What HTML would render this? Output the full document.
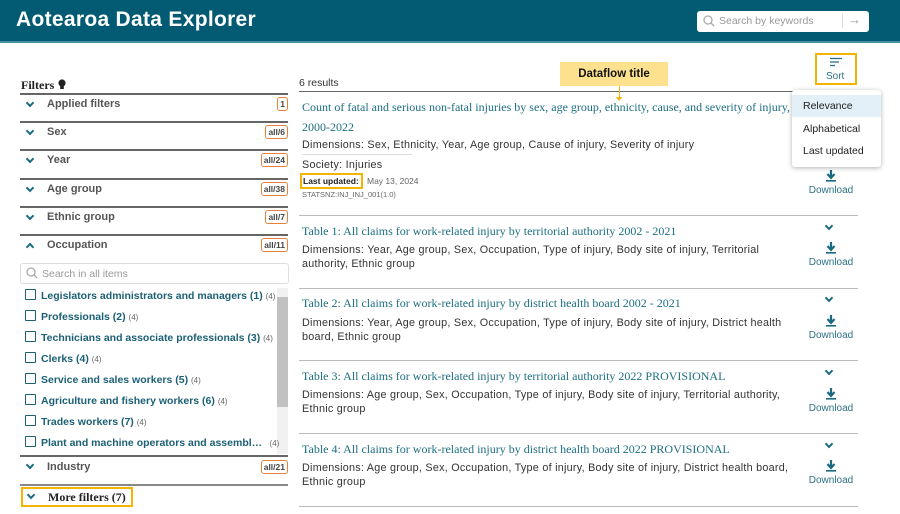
<!DOCTYPE html>
<html><head><style>
*{box-sizing:border-box;margin:0;padding:0}
body{width:900px;height:514px;overflow:hidden;background:#fff;font-family:"Liberation Sans",sans-serif;position:relative}
.abs{position:absolute}
.hdr{left:0;top:0;width:900px;height:43px;background:#035a73;border-bottom:2px solid #4a8ea0}
.sep{position:absolute;height:1px;background:#777}
.chev{position:absolute;width:6px;height:6px;border-right:2px solid #1a6a82;border-bottom:2px solid #1a6a82;transform:rotate(45deg)}
.flab{position:absolute;left:47px;font-size:11px;font-weight:bold;color:#555}
.badge{position:absolute;right:612px;border:1.5px solid #e8803a;border-radius:3px;font-size:8.5px;font-weight:bold;color:#444;padding:1px 2px;line-height:10px}
.item{position:absolute;left:25px;font-size:10.5px;color:#1b6075;font-weight:bold;white-space:nowrap}
.item:before{content:"";display:inline-block;width:9px;height:9px;border:1.5px solid #1b6075;border-radius:1px;margin-right:5px;vertical-align:-1px}
.item small{font-size:8px;color:#666;font-weight:normal}
.title{position:absolute;left:302px;font-family:"Liberation Serif",serif;font-size:12px;color:#1d6e82}
.dim{position:absolute;left:302px;width:490px;font-size:10.8px;letter-spacing:0.25px;color:#333;line-height:14px}
.dl{position:absolute;left:806px;width:50px;text-align:center;font-size:10px;color:#2a7186}
.dl svg{display:block;margin:0 auto 3px}
.rsep{position:absolute;left:299px;width:559px;height:1px;background:#bbb}
</style></head><body>
<div class="abs hdr"></div>
<div class="abs" style="left:16px;top:8px;font-size:21px;color:#fff;font-weight:bold;letter-spacing:0.3px">Aotearoa Data Explorer</div>
<div class="abs" style="left:697px;top:11px;width:172px;height:21px;background:#fff;border-radius:3px"></div>
<svg class="abs" style="left:703px;top:15px" width="12" height="12"><circle cx="5" cy="5" r="4" fill="none" stroke="#aaa" stroke-width="1.3"/><line x1="8" y1="8" x2="11" y2="11" stroke="#aaa" stroke-width="1.3"/></svg>
<div class="abs" style="left:719px;top:15px;font-size:10.5px;color:#999">Search by keywords</div>
<div class="abs" style="left:842px;top:14px;width:1px;height:14px;background:#ddd"></div>
<div class="abs" style="left:848px;top:12px;font-size:13px;color:#999">→</div>

<div class="abs" style="left:21px;top:78px;font-family:'Liberation Serif',serif;font-weight:bold;font-size:12px;color:#222">Filters</div>
<svg class="abs" style="left:58px;top:79px" width="8" height="11"><circle cx="4" cy="4" r="3.6" fill="#222"/><rect x="2.2" y="7" width="3.6" height="3" fill="#222"/></svg>
<div class="sep" style="left:20px;width:268px;top:93px;height:2px;background:#666"></div>
<div class="chev" style="left:27px;top:100px"></div><div class="flab" style="top:98px">Applied filters</div><div class="badge" style="top:97px">1</div>
<div class="sep" style="left:20px;width:268px;top:121px;height:2px;background:#666"></div>
<div class="chev" style="left:27px;top:128px"></div><div class="flab" style="top:126px">Sex</div><div class="badge" style="top:125px">all/6</div>
<div class="sep" style="left:20px;width:268px;top:149px;height:2px;background:#666"></div>
<div class="chev" style="left:27px;top:156px"></div><div class="flab" style="top:154px">Year</div><div class="badge" style="top:153px">all/24</div>
<div class="sep" style="left:20px;width:268px;top:178px;height:2px;background:#666"></div>
<div class="chev" style="left:27px;top:185px"></div><div class="flab" style="top:183px">Age group</div><div class="badge" style="top:182px">all/38</div>
<div class="sep" style="left:20px;width:268px;top:206px;height:2px;background:#666"></div>
<div class="chev" style="left:27px;top:213px"></div><div class="flab" style="top:211px">Ethnic group</div><div class="badge" style="top:210px">all/7</div>
<div class="sep" style="left:20px;width:268px;top:234px;height:2px;background:#666"></div>
<div class="chev" style="left:27px;top:244px;transform:rotate(225deg)"></div><div class="flab" style="top:239px">Occupation</div><div class="badge" style="top:238px">all/11</div>
<div class="abs" style="left:20px;top:263px;width:269px;height:21px;border:1px solid #ddd;border-radius:3px"></div>
<svg class="abs" style="left:26px;top:267px" width="12" height="12"><circle cx="5" cy="5" r="4" fill="none" stroke="#aaa" stroke-width="1.3"/><line x1="8" y1="8" x2="11" y2="11" stroke="#aaa" stroke-width="1.3"/></svg>
<div class="abs" style="left:42px;top:268px;font-size:10.5px;color:#999">Search in all items</div>
<div class="abs" style="left:277px;top:288px;width:11px;height:166px;background:#f1f1f1"></div>
<div class="abs" style="left:277px;top:297px;width:11px;height:110px;background:#c1c1c1"></div>
<div class="item" style="top:289px">Legislators administrators and managers (1) <small>(4)</small></div>
<div class="item" style="top:310px">Professionals (2) <small>(4)</small></div>
<div class="item" style="top:331px">Technicians and associate professionals (3) <small>(4)</small></div>
<div class="item" style="top:352px">Clerks (4) <small>(4)</small></div>
<div class="item" style="top:373px">Service and sales workers (5) <small>(4)</small></div>
<div class="item" style="top:394px">Agriculture and fishery workers (6) <small>(4)</small></div>
<div class="item" style="top:415px">Trades workers (7) <small>(4)</small></div>
<div class="item" style="top:436px">Plant and machine operators and assembl… <small>&nbsp;&nbsp;(4)</small></div>
<div class="sep" style="left:20px;width:268px;top:455px;height:2px;background:#666"></div>
<div class="chev" style="left:27px;top:462px"></div><div class="flab" style="top:461px">Industry</div><div class="badge" style="top:460px">all/21</div>
<div class="sep" style="left:20px;width:268px;top:484px;height:2px;background:#888"></div>
<div class="abs" style="left:21px;top:487px;width:112px;height:20px;border:2px solid #f4b400"></div>
<div class="chev" style="left:28px;top:492px"></div>
<div class="abs" style="left:48px;top:490px;font-family:'Liberation Serif',serif;font-weight:bold;font-size:12px;color:#222">More filters (7)</div>

<div class="abs" style="left:299px;top:77px;font-size:10.5px;color:#333">6 results</div>
<div class="abs" style="left:299px;top:91px;width:559px;height:1px;background:#666"></div>
<div class="abs" style="left:560px;top:62px;width:108px;height:24px;background:#fde18e;font-size:11.5px;font-weight:bold;text-align:center;line-height:24px;color:#111">Dataflow title</div>
<div class="abs" style="left:619px;top:86px;width:1px;height:12px;background:#f4b400"></div>
<div class="abs" style="left:616px;top:97px;width:0;height:0;border-left:3px solid transparent;border-right:3px solid transparent;border-top:4px solid #f4b400"></div>
<div class="title" style="top:97px;width:495px;line-height:20px">Count of fatal and serious non-fatal injuries by sex, age group, ethnicity, cause, and severity of injury, 2000-2022</div>
<div class="dim" style="top:138px">Dimensions: Sex, Ethnicity, Year, Age group, Cause of injury, Severity of injury</div>
<div class="abs" style="left:302px;top:154px;width:110px;height:1px;background:#ddd"></div>
<div class="dim" style="top:158px">Society: Injuries</div>
<div class="abs" style="left:300px;top:173px;width:63px;height:16px;border:2px solid #f4b400"></div>
<div class="abs" style="left:303px;top:176px;font-size:8.5px;font-weight:bold;color:#222">Last updated:</div>
<div class="abs" style="left:367px;top:176px;font-size:8.5px;color:#666">May 13, 2024</div>
<div class="abs" style="left:302px;top:190px;font-size:7.5px;color:#666">STATSNZ:INJ_INJ_001(1.0)</div>
<div class="dl" style="top:170px"><svg width="10" height="12"><path d="M5 0v7M1.5 4l3.5 4 3.5-4" stroke="#1a6a82" stroke-width="2.2" fill="none"/><rect x="0" y="10" width="10" height="1.6" fill="#1a6a82"/></svg>Download</div>
<div class="rsep" style="top:215px"></div>

<div class="title" style="top:224px">Table 1: All claims for work-related injury by territorial authority 2002 - 2021</div>
<div class="dim" style="top:243px">Dimensions: Year, Age group, Sex, Occupation, Type of injury, Body site of injury, Territorial authority, Ethnic group</div>
<div class="chev" style="left:826px;top:223px"></div>
<div class="dl" style="top:242px"><svg width="10" height="12"><path d="M5 0v7M1.5 4l3.5 4 3.5-4" stroke="#1a6a82" stroke-width="2.2" fill="none"/><rect x="0" y="10" width="10" height="1.6" fill="#1a6a82"/></svg>Download</div>
<div class="rsep" style="top:288px"></div>

<div class="title" style="top:296px">Table 2: All claims for work-related injury by district health board 2002 - 2021</div>
<div class="dim" style="top:316px">Dimensions: Year, Age group, Sex, Occupation, Type of injury, Body site of injury, District health board, Ethnic group</div>
<div class="chev" style="left:826px;top:295px"></div>
<div class="dl" style="top:315px"><svg width="10" height="12"><path d="M5 0v7M1.5 4l3.5 4 3.5-4" stroke="#1a6a82" stroke-width="2.2" fill="none"/><rect x="0" y="10" width="10" height="1.6" fill="#1a6a82"/></svg>Download</div>
<div class="rsep" style="top:360px"></div>

<div class="title" style="top:369px">Table 3: All claims for work-related injury by territorial authority 2022 PROVISIONAL</div>
<div class="dim" style="top:388px">Dimensions: Age group, Sex, Occupation, Type of injury, Body site of injury, Territorial authority, Ethnic group</div>
<div class="chev" style="left:826px;top:368px"></div>
<div class="dl" style="top:388px"><svg width="10" height="12"><path d="M5 0v7M1.5 4l3.5 4 3.5-4" stroke="#1a6a82" stroke-width="2.2" fill="none"/><rect x="0" y="10" width="10" height="1.6" fill="#1a6a82"/></svg>Download</div>
<div class="rsep" style="top:433px"></div>

<div class="title" style="top:442px">Table 4: All claims for work-related injury by district health board 2022 PROVISIONAL</div>
<div class="dim" style="top:461px">Dimensions: Age group, Sex, Occupation, Type of injury, Body site of injury, District health board, Ethnic group</div>
<div class="chev" style="left:826px;top:441px"></div>
<div class="dl" style="top:460px"><svg width="10" height="12"><path d="M5 0v7M1.5 4l3.5 4 3.5-4" stroke="#1a6a82" stroke-width="2.2" fill="none"/><rect x="0" y="10" width="10" height="1.6" fill="#1a6a82"/></svg>Download</div>
<div class="rsep" style="top:506px"></div>

<div class="abs" style="left:815px;top:53px;width:42px;height:32px;border:2px solid #f4b400"></div>
<svg class="abs" style="left:829px;top:57px" width="14" height="10"><line x1="1" y1="1.5" x2="13" y2="1.5" stroke="#2a7186" stroke-width="1.3"/><line x1="1" y1="5" x2="10" y2="5" stroke="#2a7186" stroke-width="1.3"/><line x1="1" y1="8.5" x2="6" y2="8.5" stroke="#2a7186" stroke-width="1.3"/></svg>
<div class="abs" style="left:826px;top:71px;font-size:10px;color:#2a7186">Sort</div>
<div class="abs" style="left:792px;top:90px;width:89px;height:77px;background:#fff;box-shadow:0 1px 5px rgba(0,0,0,.3);border-radius:3px"></div>
<div class="abs" style="left:792px;top:95px;width:89px;height:22px;background:#e3f0f8"></div>
<div class="abs" style="left:803px;top:100px;font-size:10.5px;color:#222">Relevance</div>
<div class="abs" style="left:803px;top:123px;font-size:10.5px;color:#222">Alphabetical</div>
<div class="abs" style="left:803px;top:145px;font-size:10.5px;color:#222">Last updated</div>
</body></html>
